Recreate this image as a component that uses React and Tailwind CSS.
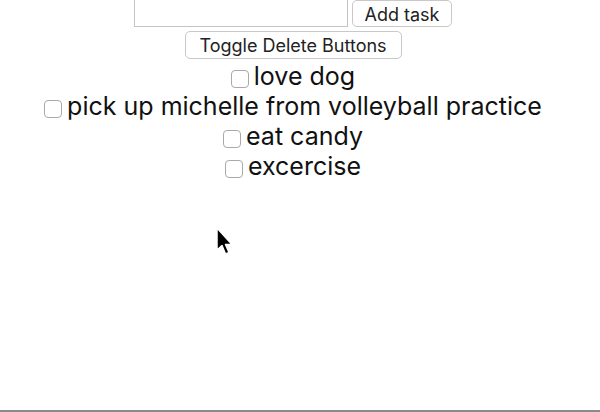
import React, { useState } from 'react';

const tasks = [
  'love dog',
  'pick up michelle from volleyball practice',
  'eat candy',
  'excercise',
];

function Cursor() {
  return (
    <svg
      className="absolute left-[214px] top-[226px]"
      width="22"
      height="32"
      viewBox="0 0 22 32"
    >
      <path
        d="M3 2 L3 24 L8 19.5 L11.5 28 L15 26.5 L11.5 18.5 L18 18.5 Z"
        fill="#000"
        stroke="#fff"
        strokeWidth="1.5"
        strokeLinejoin="round"
      />
    </svg>
  );
}

function App() {
  const [task, setTask] = useState('');
  const [checked, setChecked] = useState({});

  return (
    <div
      className="relative h-[412px] w-[600px] overflow-hidden bg-white text-black"
      style={{ fontFamily: 'Inter, "Liberation Sans", Arial, sans-serif' }}
    >
      <div className="w-[586px] flex flex-col items-center">
        <div className="flex items-end gap-[4px] -mt-[4px]">
          <input
            value={task}
            onChange={(e) => setTask(e.target.value)}
            className="w-[214px] h-[31px] border border-[#c4c4c4] bg-white outline-none"
          />
          <button className="h-[27px] w-[100px] rounded-[5px] border border-[#c8c8c8] bg-white text-[18px] text-[#222]">
            Add task
          </button>
        </div>
        <button className="mt-[4px] h-[28px] w-[217px] rounded-[5px] border border-[#c8c8c8] bg-white text-[18px] text-[#222]">
          Toggle Delete Buttons
        </button>
        <div className="mt-[2px] flex flex-col items-center">
          {tasks.map((t, i) => (
            <label
              key={t}
              className="flex h-[30px] items-center text-[25px] leading-[30px] text-[#111]"
            >
              <input
                type="checkbox"
                checked={!!checked[i]}
                onChange={() => setChecked({ ...checked, [i]: !checked[i] })}
                className="appearance-none mr-[5px] mt-[5px] h-[18px] w-[18px] rounded-[4px] border border-[#a9a9a9] bg-white"
              />
              <span>{t}</span>
            </label>
          ))}
        </div>
      </div>
      <Cursor />
      <div className="absolute bottom-0 left-0 h-[2px] w-full bg-[#8a8a8a]" />
    </div>
  );
}

export default App;
